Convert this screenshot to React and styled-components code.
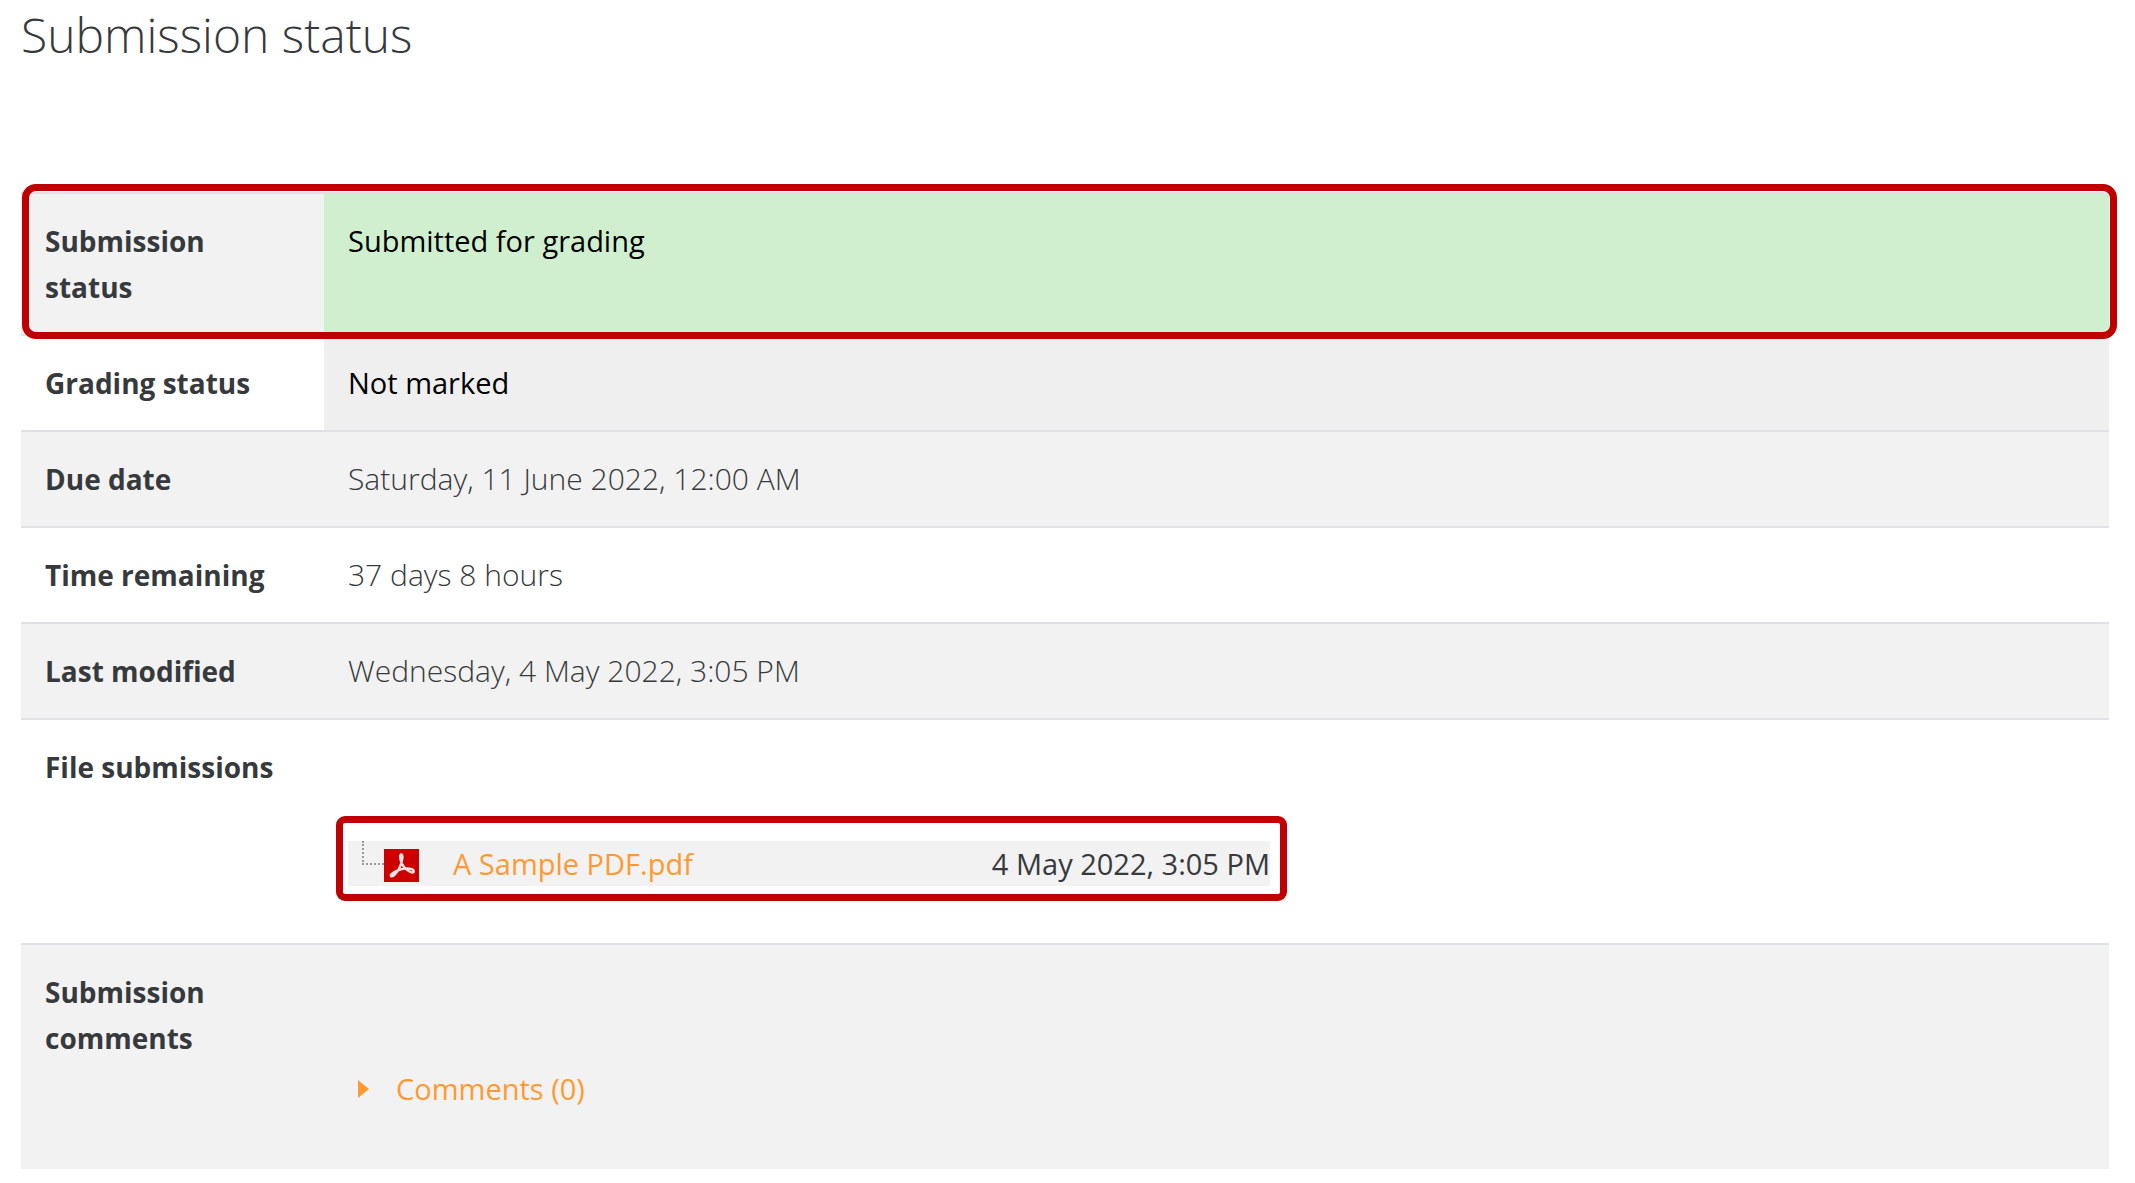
import styled, { createGlobalStyle } from "styled-components";

const App = () => {
    return (
        <>
            <GlobalStyle />
            <Container>
                <Title>Submission status</Title>
                <Table>
                    <tbody>
                        <Row>
                            <Label scope="row">Submission status</Label>
                            <Value $state="submitted">
                                Submitted for grading
                                <RowHighlight />
                            </Value>
                        </Row>
                        <Row>
                            <Label scope="row">Grading status</Label>
                            <Value $state="notMarked">Not marked</Value>
                        </Row>
                        <Row>
                            <Label scope="row">Due date</Label>
                            <Value>Saturday, 11 June 2022, 12:00 AM</Value>
                        </Row>
                        <Row>
                            <Label scope="row">Time remaining</Label>
                            <Value>37 days 8 hours</Value>
                        </Row>
                        <Row>
                            <Label scope="row">Last modified</Label>
                            <Value>Wednesday, 4 May 2022, 3:05 PM</Value>
                        </Row>
                        <Row>
                            <Label scope="row">File submissions</Label>
                            <Value>
                                <Plugin>
                                    <File>
                                        <TreeLine />
                                        <PdfIcon />
                                        <FileLink href="#file">A Sample PDF.pdf</FileLink>
                                        <FileDate>4 May 2022, 3:05 PM</FileDate>
                                        <FileHighlight />
                                    </File>
                                </Plugin>
                            </Value>
                        </Row>
                        <Row>
                            <Label scope="row">Submission comments</Label>
                            <Value>
                                <Plugin>
                                    <CommentsLink href="#comments">
                                        <Caret />
                                        Comments (0)
                                    </CommentsLink>
                                </Plugin>
                            </Value>
                        </Row>
                    </tbody>
                </Table>
            </Container>
        </>
    );
}

const PdfIcon = () => {
    return (
        <PdfSvg viewBox="0 0 35 33" aria-hidden="true">
            <rect width="35" height="33" fill="#cc0000" />
            <path
                d="M17.500 5.500c-2.200-.3-1.500 4.500.3 9 1.800 4 6.500 8 9.800 8.900 3 .8 3.200-2.600-.8-3.600-4-.9-9.500.2-13.500 1.900-4.500 1.900-7.200 4-6.300 5.300 1 1.400 5-1.800 7.800-6.800 2.600-4.800 5.100-14.300 2.700-14.700z"
                fill="none"
                stroke="#fbe3e3"
                strokeWidth="2.400"
                strokeLinejoin="round"
            />
        </PdfSvg>
    );
}

export default App;

const GlobalStyle = createGlobalStyle`
    * {
        box-sizing: border-box;
    }

    body {
        margin: 0;
        background: #ffffff;
        color: #373a3c;
        font-family: "Segoe UI", "Open Sans", "Noto Sans", sans-serif;
        font-size: 29px;
        line-height: 46px;
    }
`;

const Container = styled.main`
    padding: 0 26px 15px 21px;
`;

const Title = styled.h3`
    margin: 0 0 122px;
    font-size: 48px;
    font-weight: 300;
    line-height: 70px;
`;

const Table = styled.table`
    width: 100%;
    border-spacing: 0;
`;

const Row = styled.tr`
    position: relative;

    &:nth-child(odd) {
        background: #f2f2f2;
    }
`;

const Label = styled.th`
    width: 303px;
    padding: 24px 40px 24px 24px;
    border-top: 2px solid #dee2e6;
    font-size: 28px;
    font-weight: 700;
    text-align: left;
    vertical-align: top;
`;

const backgrounds = {
    submitted: "#cfefcf",
    notMarked: "#efefef",
};

const Value = styled.td`
    padding: 24px;
    border-top: 2px solid #dee2e6;
    background: ${({ $state }) => backgrounds[$state] || "transparent"};
    color: ${({ $state }) => ($state ? "#000000" : "inherit")};
    font-size: ${({ $state }) => ($state ? "29px" : "30px")};
    font-weight: ${({ $state }) => ($state ? 400 : 300)};
    vertical-align: top;
`;

const Highlight = styled.span`
    position: absolute;
    z-index: 1;
    border: 7px solid #c00000;
    pointer-events: none;
`;

const RowHighlight = styled(Highlight)`
    top: -8px;
    right: -8px;
    bottom: -5px;
    left: 1px;
    border-radius: 14px;
`;

const FileHighlight = styled(Highlight)`
    top: -25px;
    right: -17px;
    bottom: -15px;
    left: -12px;
    border-radius: 9px;
`;

const Plugin = styled.div`
    padding: 97px 0 33px;
    font-size: 29px;
    font-weight: 400;
`;

const File = styled.div`
    position: relative;
    display: flex;
    align-items: center;
    max-width: 922px;
    height: 45px;
    background: #f2f2f2;
`;

const TreeLine = styled.span`
    align-self: flex-start;
    width: 22px;
    height: 24px;
    margin-left: 14px;
    border-bottom: 2px dotted #999999;
    border-left: 2px dotted #999999;
`;

const PdfSvg = styled.svg`
    width: 35px;
    height: 33px;
    margin-top: 4px;
`;

const FileLink = styled.a`
    margin-left: 34px;
    color: #ff9933;
    text-decoration: none;
`;

const FileDate = styled.span`
    margin-left: auto;
`;

const CommentsLink = styled.a`
    display: flex;
    align-items: center;
    padding-left: 10px;
    color: #ff9933;
    text-decoration: none;
`;

const Caret = styled.span`
    margin-right: 27px;
    border-top: 9px solid transparent;
    border-bottom: 9px solid transparent;
    border-left: 11px solid #ff9933;
`;
